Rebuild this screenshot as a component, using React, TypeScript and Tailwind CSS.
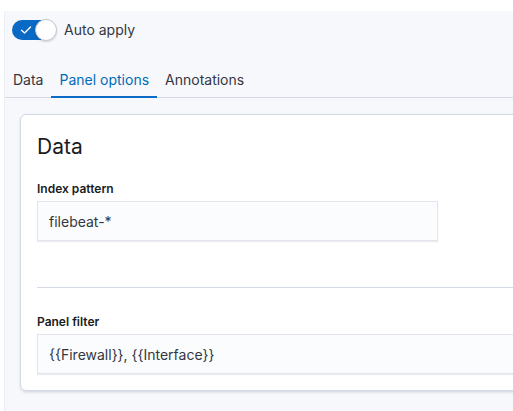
import React from "react";

const font = { fontFamily: "Inter, 'Liberation Sans', sans-serif" };

function Toggle() {
  return (
    <div className="relative h-[20px] w-[44px] rounded-full bg-[#0a69c4]">
      <svg
        className="absolute left-[8px] top-[5px]"
        width="12"
        height="10"
        viewBox="0 0 12 10"
        fill="none"
      >
        <path d="M1.5 5.2 L4.6 8 L10.5 2" stroke="white" strokeWidth="1.3" strokeLinecap="round" strokeLinejoin="round" />
      </svg>
      <div className="absolute right-[-1px] top-[-1px] h-[22px] w-[22px] rounded-full border border-[#c2c8d3] bg-white shadow-[0_1px_2px_rgba(0,0,0,0.15)]" />
    </div>
  );
}

function Field({ label, value, narrow }: { label: string; value: string; narrow?: boolean }) {
  return (
    <div>
      <div className="mb-[4px] text-[12px] font-semibold leading-[16px] text-[#1a1c21]">{label}</div>
      <div
        className={`flex h-[40px] items-center border border-[#e3e5ee] bg-[#fbfcfd] px-[11px] text-[14px] text-[#343741] shadow-[0_1px_1px_rgba(152,162,179,0.2)] ${
          narrow ? "w-[401px]" : "w-full"
        }`}
      >
        {value}
      </div>
    </div>
  );
}

export default function App() {
  const tabs = ["Data", "Panel options", "Annotations"];
  return (
    <div className="h-[411px] w-[513px] overflow-hidden bg-white pl-[4px] pt-[11px]" style={font}>
      <div className="h-full border-l border-[#eceff5] bg-[#f7f8fc]">
        <div className="flex items-center gap-[8px] pl-[7px] pt-[8px]">
          <Toggle />
          <span className="text-[14px] text-[#343741]">Auto apply</span>
        </div>

        <div className="mt-[22px] flex border-b border-[#d3dae6]">
          {tabs.map((t) => (
            <div
              key={t}
              className={`-mb-px flex h-[36px] items-center border-b-2 px-[8px] text-[14px] ${
                t === "Panel options" ? "border-[#0a6ac4] text-[#006bb8]" : "border-transparent text-[#343741]"
              }`}
            >
              {t}
            </div>
          ))}
        </div>

        <div className="ml-[15px] mt-[16px] w-[620px] rounded-[6px] border border-[#d3dae6] bg-white p-[16px] shadow-[0_2px_3px_-1px_rgba(152,162,179,0.35),0_1px_5px_-2px_rgba(152,162,179,0.3)]">
          <h2 className="mb-[18px] text-[21px] font-normal leading-[32px] text-[#1a1c21]">Data</h2>
          <Field label="Index pattern" value="filebeat-*" narrow />
          <div className="mb-[26px] mt-[46px] h-px bg-[#d3dae6]" />
          <Field label="Panel filter" value="{{Firewall}}, {{Interface}}" />
        </div>
      </div>
    </div>
  );
}
